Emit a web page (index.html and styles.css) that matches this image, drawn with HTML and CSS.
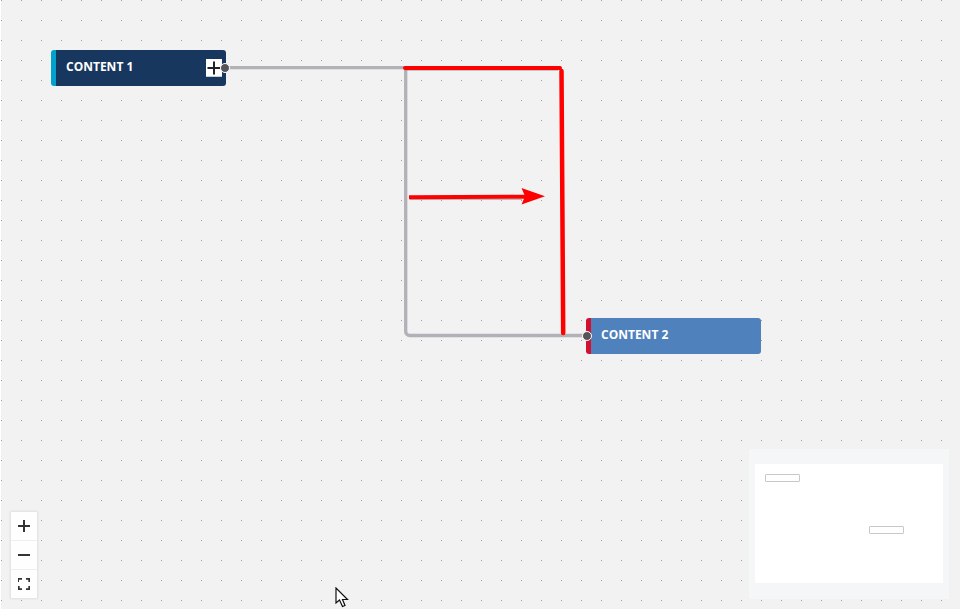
FILE: index.html
```html
<!DOCTYPE html>
<html lang="en">
<head>
<meta charset="utf-8">
<title>Flow diagram</title>
<link rel="stylesheet" href="styles.css">
</head>
<body>
<main class="canvas">
  <svg class="edges" width="961" height="609" viewBox="0 0 961 609">
    <path class="edge" d="M225 67.700H405.700V331.500a4 4 0 0 0 4 4H587"/>
    <path class="mark-shadow" d="M405 70.300H558"/>
    <path class="mark-shadow" d="M410 199.500H522"/>
    <path class="mark" d="M405 68H560"/>
    <path class="mark mark-wide" d="M561.500 71L563.200 333"/>
    <path class="mark-thin" d="M409 197.300L525 196.700"/>
    <path class="mark-head" d="M521.500 188L545 196.200L521.500 204.500L525 196.200Z"/>
  </svg>

  <article class="node node-one">
    <span class="node-label">CONTENT 1</span>
    <button class="add" type="button" aria-label="Add">
      <svg width="16" height="16" viewBox="0 0 16 16"><path d="M8 1.500V14.500M1.500 8H14.500"/></svg>
    </button>
    <span class="port port-right"></span>
  </article>

  <article class="node node-two">
    <span class="node-label">CONTENT 2</span>
    <span class="port port-left"></span>
  </article>

  <nav class="zoom-controls" aria-label="Zoom">
    <button class="zoom-btn" type="button" aria-label="Zoom in">
      <svg width="12" height="12" viewBox="0 0 12 12"><path d="M6 0V12M0 6H12"/></svg>
    </button>
    <button class="zoom-btn" type="button" aria-label="Zoom out">
      <svg width="12" height="12" viewBox="0 0 12 12"><path d="M0 6H12"/></svg>
    </button>
    <button class="zoom-btn" type="button" aria-label="Fit view">
      <svg width="12" height="12" viewBox="0 0 12 12"><path d="M0 4V.7H4M8 .7H11.300V4M11.300 8V11.300H8M4 11.300H.7V8"/></svg>
    </button>
  </nav>

  <aside class="minimap" aria-label="Minimap">
    <div class="minimap-view">
      <span class="mini-node mini-one"></span>
      <span class="mini-node mini-two"></span>
    </div>
  </aside>

  <svg class="cursor" width="14" height="21" viewBox="0 0 14 21"><path d="M1 1V16L4.500 13L7.500 19.500L10 18.500L7.500 12.500H12.500Z"/></svg>
</main>
</body>
</html>
```
FILE: styles.css
```css
html, body {
  margin: 0;
  padding: 0;
  background: #fff;
}

body {
  width: 961px;
  height: 609px;
  overflow: hidden;
  font-family: "Open Sans", "Liberation Sans", sans-serif;
}

.canvas {
  position: relative;
  width: 959px;
  height: 609px;
  margin-left: 1px;
  overflow: hidden;
  background-color: #f2f2f2;
  background-image: radial-gradient(circle at 10.5px 10.5px, #9c9ca2 0.5px, #c4c4c8 0.8px, transparent 1px);
  background-size: 20px 20px;
  background-position: 10px -10px;
}

.edges {
  position: absolute;
  left: -1px;
  top: 0;
}

.edge {
  fill: none;
  stroke: #b1b1b7;
  stroke-width: 3.300;
}

.mark-shadow {
  fill: none;
  stroke: #8a8a90;
  stroke-width: 1;
  opacity: 0.55;
}

.mark {
  fill: none;
  stroke: #ff0000;
  stroke-width: 4;
  stroke-linecap: round;
}

.mark-wide {
  stroke-width: 4.500;
}

.mark-thin {
  fill: none;
  stroke: #ff0000;
  stroke-width: 4;
}

.mark-head {
  fill: #ff0000;
}

.node {
  position: absolute;
  box-sizing: border-box;
  width: 175px;
  height: 36px;
  display: flex;
  align-items: center;
  padding-left: 10px;
  padding-bottom: 2px;
  border-left: 5px solid;
  border-radius: 3px;
}

.node-one {
  left: 50px;
  top: 50px;
  background: #18375f;
  border-left-color: #00a3cc;
}

.node-two {
  left: 585px;
  top: 318px;
  background: #4f81bd;
  border-left-color: #d3102f;
}

.node-label {
  font-size: 12px;
  font-weight: 700;
  color: #fff;
  line-height: 1;
}

.add {
  position: absolute;
  right: 4px;
  top: 9px;
  width: 16px;
  height: 18px;
  padding: 0;
  border: 0;
  border-bottom: 1px solid #c9ced6;
  background: #fff;
  display: flex;
  align-items: center;
  justify-content: center;
}

.add svg path {
  fill: none;
  stroke: #222;
  stroke-width: 2;
}

.port {
  position: absolute;
  box-sizing: border-box;
  width: 10px;
  height: 10px;
  border-radius: 50%;
  background: #555;
  border: 1px solid #fff;
  top: 13px;
}

.port-right {
  right: -4px;
}

.port-left {
  left: -9px;
  top: 13px;
}

.zoom-controls {
  position: absolute;
  left: 10px;
  top: 512px;
  width: 26px;
  display: flex;
  flex-direction: column;
  box-shadow: 0 0 2px 1px rgba(0, 0, 0, 0.08);
}

.zoom-btn {
  box-sizing: border-box;
  height: 29px;
  padding: 0;
  border: 0;
  border-bottom: 1px solid #eee;
  background: #fefefe;
  display: flex;
  align-items: center;
  justify-content: center;
}

.zoom-btn:last-child {
  height: 28px;
  border-bottom: 0;
}

.zoom-btn svg path {
  fill: none;
  stroke: #333;
  stroke-width: 2;
}

.minimap {
  position: absolute;
  left: 748px;
  top: 449px;
  box-sizing: border-box;
  width: 200px;
  height: 150px;
  padding: 15px 6px;
  background: #f5f6f8;
}

.minimap-view {
  position: relative;
  height: 119px;
  background: #fff;
}

.mini-node {
  position: absolute;
  box-sizing: border-box;
  width: 35px;
  height: 8px;
  border: 1px solid #c8c8c8;
  border-radius: 1px;
  background: #fff;
}

.mini-one {
  left: 10px;
  top: 10px;
}

.mini-two {
  left: 114px;
  top: 62px;
}

.cursor {
  position: absolute;
  left: 334px;
  top: 587px;
}

.cursor path {
  fill: #fff;
  stroke: #111;
  stroke-width: 1.200;
}
```
